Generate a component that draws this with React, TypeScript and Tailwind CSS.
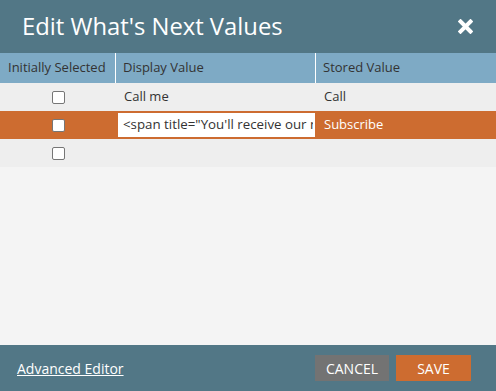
import React from "react";

function Check() {
  return (
    <div className="w-[13px] h-[13px] bg-white border border-[#767676] rounded-[2px]" />
  );
}

function Row({ bg, display, stored, input, storedClass }: { bg: string; display?: string; stored?: string; input?: string; storedClass?: string }) {
  return (
    <div className={`flex h-[28px] ${bg}`}>
      <div className="w-[117px] shrink-0 flex items-center justify-center">
        <Check />
      </div>
      <div className="w-[200px] shrink-0 flex items-center pl-[7px] overflow-hidden">
        {input !== undefined ? (
          <div className="ml-[-6px] w-[197px] shrink-0 h-[24px] bg-white flex items-center pl-[5px] pr-[2px] text-[13.3px] text-[#333]">
            <div className="flex-1 overflow-hidden whitespace-nowrap">{input}</div>
          </div>
        ) : (
          <span className="text-[13px] text-[#333]">{display}</span>
        )}
      </div>
      <div className="flex-1 flex items-center pl-[7px]">
        <span className={`text-[13px] ${storedClass ?? "text-[#333]"}`}>{stored}</span>
      </div>
    </div>
  );
}

export default function App() {
  return (
    <div className="w-[496px] h-[391px] flex flex-col bg-[#f4f4f4]" style={{ fontFamily: '"Open Sans", sans-serif' }}>
      <div className="h-[53px] bg-[#527786] flex items-center justify-between pl-[22px] pr-[23px]">
        <span className="text-white text-[23.8px] leading-none">Edit What's Next Values</span>
        <svg width="15" height="15" viewBox="0 0 15 15">
          <path d="M2.5 2.5 L12.5 12.5 M12.5 2.5 L2.5 12.5" stroke="white" strokeWidth="4" strokeLinecap="square" />
        </svg>
      </div>
      <div className="h-[30px] bg-[#7eaac5] flex text-[13px] text-[#333]">
        <div className="w-[116px] flex items-center pl-[8px] border-r border-white">Initially Selected</div>
        <div className="w-[200px] flex items-center pl-[7px] border-r border-white">Display Value</div>
        <div className="flex-1 flex items-center pl-[7px]">Stored Value</div>
      </div>
      <Row bg="bg-[#eeeeee]" display="Call me" stored="Call" />
      <Row bg="bg-[#cd6c30]" input={`<span title="You'll receive our newsletter">`} stored="Subscribe" storedClass="text-white" />
      <Row bg="bg-[#eeeeee]" />
      <div className="flex-1" />
      <div className="h-[46px] bg-[#527786] flex items-center justify-between pl-[17px] pr-[25px]">
        <a className="text-white text-[14px] underline">Advanced Editor</a>
        <div className="flex gap-[7px]">
          <button className="w-[74px] h-[26px] bg-[#737373] text-white text-[14px]">CANCEL</button>
          <button className="w-[75px] h-[26px] bg-[#cd6c30] text-white text-[14px]">SAVE</button>
        </div>
      </div>
    </div>
  );
}
